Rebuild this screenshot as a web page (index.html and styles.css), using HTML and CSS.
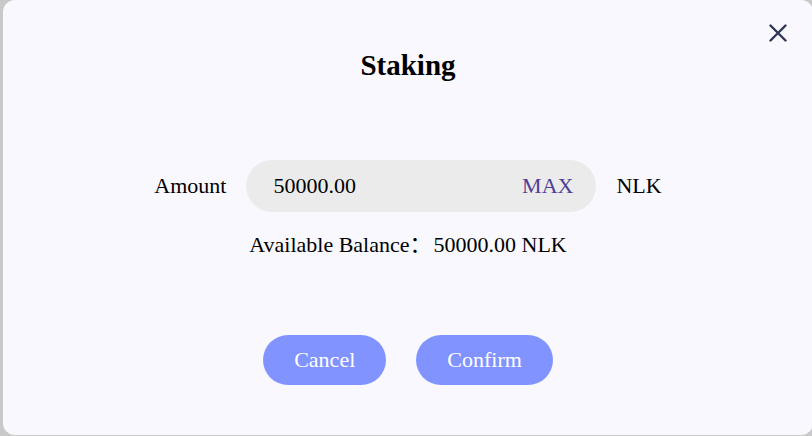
FILE: index.html
```html
<!DOCTYPE html>
<html lang="en">
<head>
<meta charset="utf-8">
<title>Staking</title>
<link rel="stylesheet" href="styles.css">
</head>
<body>
<div class="backdrop">
  <div class="modal">
    <button class="close" aria-label="Close">
      <svg width="18" height="18" viewBox="0 0 18 18"><path d="M1.5 1.5 L16.5 16.5 M16.5 1.5 L1.5 16.5" stroke="#2c3756" stroke-width="2.4" stroke-linecap="round" fill="none"/></svg>
    </button>
    <h2 class="title">Staking</h2>
    <div class="amount-row">
      <span class="label">Amount</span>
      <div class="pill">
        <span class="value">50000.00</span>
        <span class="max">MAX</span>
      </div>
      <span class="unit">NLK</span>
    </div>
    <p class="balance">Available Balance<span class="colon">：</span>50000.00 NLK</p>
    <div class="actions">
      <button class="btn">Cancel</button>
      <button class="btn">Confirm</button>
    </div>
  </div>
</div>
</body>
</html>
```
FILE: styles.css
```css
html, body {
  margin: 0;
  padding: 0;
  width: 812px;
  height: 436px;
  overflow: hidden;
  background: #c9c9c9;
  font-family: "Liberation Serif", "Times New Roman", serif;
}
.backdrop {
  padding-left: 3px;
  height: 436px;
  box-sizing: border-box;
}
.modal {
  position: relative;
  width: 810px;
  height: 435px;
  background: #f9f8fe;
  border-radius: 12px;
  display: flex;
  flex-direction: column;
  align-items: center;
  box-sizing: border-box;
  padding-top: 49px;
}
.close {
  position: absolute;
  top: 24px;
  right: 26px;
  width: 18px;
  height: 18px;
  padding: 0;
  border: 0;
  background: none;
  display: flex;
}
.title {
  margin: 0;
  font-size: 29px;
  line-height: 32px;
  font-weight: bold;
  color: #000;
}
.amount-row {
  margin-top: 79px;
  display: flex;
  align-items: center;
  gap: 20px;
  font-size: 22px;
  color: #000;
}
.pill {
  width: 350px;
  height: 52px;
  border-radius: 26px;
  background: #ebebeb;
  display: flex;
  align-items: center;
  justify-content: space-between;
  padding: 0 23px 0 27px;
  box-sizing: border-box;
}
.max {
  color: #4f3f96;
}
.balance {
  margin: 18px 0 0;
  height: 30px;
  font-size: 22px;
  line-height: 30px;
  color: #000;
}
.colon {
  font-family: "Noto Sans CJK SC", sans-serif;
  line-height: 1;
  margin-right: 2px;
}
.actions {
  margin-top: 75px;
  display: flex;
  gap: 30px;
}
.btn {
  height: 50px;
  padding: 0 31px;
  border: 0;
  border-radius: 25px;
  background: #8193ff;
  color: #fff;
  font-family: "Liberation Serif", "Times New Roman", serif;
  font-size: 22px;
}
```
